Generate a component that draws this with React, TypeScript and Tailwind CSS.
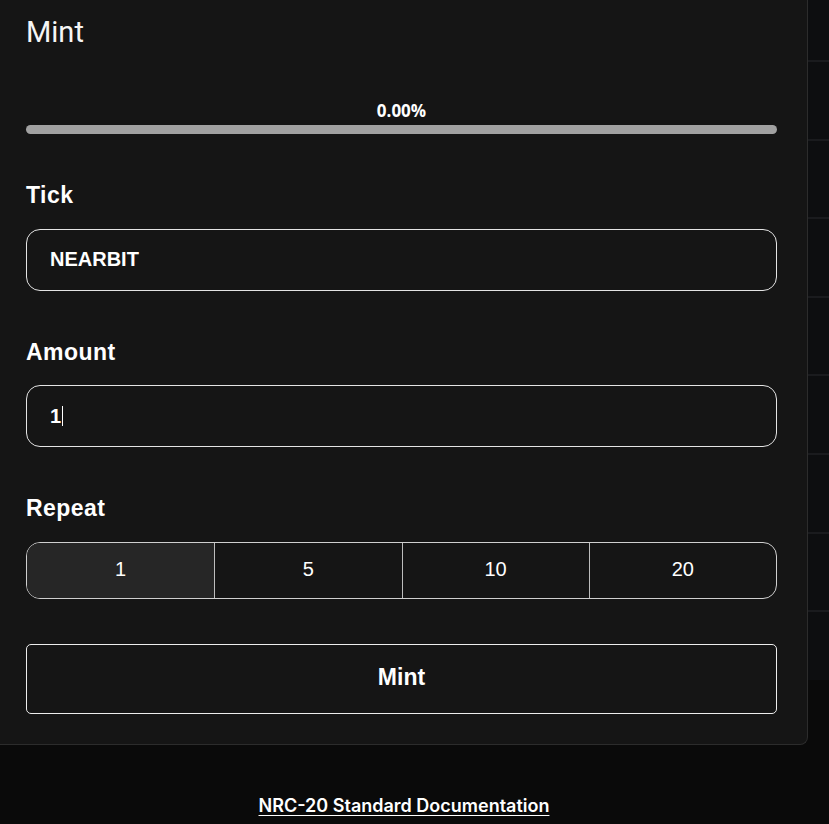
import { useState } from "react";

const repeats = [1, 5, 10, 20];
const bgRows = [0, 1, 2, 3, 4, 5, 6, 7];

const App = () => {
  const [repeat, setRepeat] = useState<number>(1);

  return (
    <div
      className="flex w-full h-[824px] overflow-hidden bg-[#0a0a0a] text-white"
      style={{ fontFamily: '"Liberation Sans", Arial, sans-serif' }}
    >
      <div className="w-[808px] shrink-0 flex flex-col">
        <div className="h-[745px] bg-[#151515] border-r border-b border-[#2c2c2c] rounded-br-lg pl-[26px] pr-[30px] pt-[15px]">
          <h2 className="text-[29px] leading-[34px] font-['Roboto',sans-serif] font-normal text-[#f5f5f5]">
            Mint
          </h2>

          <div className="mt-[52px] flex flex-col">
            <span className="text-center text-[17px] leading-[20px] font-bold font-['Open_Sans',sans-serif]">
              0.00%
            </span>
            <div className="mt-[4px] h-[9px] w-full rounded-full bg-[#a1a1a1]" />
          </div>

          <div className="mt-[48px] text-[23px] leading-[26px] font-bold tracking-[0.02em]">Tick</div>
          <div className="mt-[21px] h-[62px] rounded-[14px] border border-[#e4e4e4] flex items-center px-[23px] pb-[2px]">
            <span className="text-[20px] font-bold">NEARBIT</span>
          </div>

          <div className="mt-[48px] text-[23px] leading-[26px] font-bold tracking-[0.02em]">Amount</div>
          <div className="mt-[20px] h-[62px] rounded-[14px] border border-[#e4e4e4] flex items-center px-[23px]">
            <span className="text-[20px] font-bold">1</span>
            <span className="ml-[1px] w-[1px] h-[20px] bg-white" />
          </div>

          <div className="mt-[48px] text-[23px] leading-[26px] font-bold tracking-[0.02em]">Repeat</div>
          <div className="mt-[21px] h-[57px] rounded-[14px] border border-[#cfcfcf] grid grid-cols-4 overflow-hidden">
            {repeats.map((r, i) => (
              <button
                key={r}
                onClick={() => setRepeat(r)}
                className={
                  "flex items-center justify-center pb-[3px] text-[20px] " +
                  (i > 0 ? "border-l border-[#bdbdbd] " : "") +
                  (repeat === r ? "bg-[#262626]" : "bg-transparent")
                }
              >
                {r}
              </button>
            ))}
          </div>

          <button className="mt-[45px] w-full h-[70px] rounded-[5px] border border-[#ededed] pb-[4px] text-[23px] font-bold">
            Mint
          </button>
        </div>

        <div className="pt-[49px] text-center">
          <a
            href="#"
            className="text-[18px] leading-[24px] font-semibold underline underline-offset-[3px] font-['Inter',sans-serif]"
          >
            NRC-20 Standard Documentation
          </a>
        </div>
      </div>

      <div className="flex-1 flex flex-col">
        <div className="h-[680px] flex flex-col pt-[60px] bg-[#0d0e10]">
          {bgRows.map((r) => (
            <div key={r} className="h-[78.6px] shrink-0 border-t-2 border-[#1a1b1e]" />
          ))}
        </div>
      </div>
    </div>
  );
};

export default App;
